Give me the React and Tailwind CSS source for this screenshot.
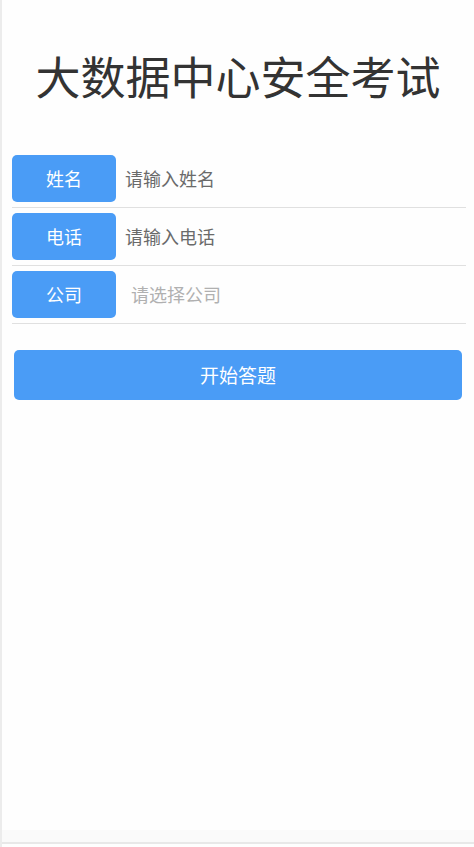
import React from 'react';

const font = { fontFamily: '"Noto Sans CJK SC", "Noto Sans", sans-serif' };

const Row = ({ label, placeholder, light }) => (
  <div className="flex items-center h-[58px] pt-[5px] pb-[6px] border-b border-[#e0e0e0]">
    <div className="w-[104px] h-[47px] rounded-[5px] bg-[#4a9cf6] text-white text-[18px] flex items-center justify-center">
      {label}
    </div>
    <div
      className={
        light
          ? 'pl-[15px] text-[18px] text-[#b0b0b0]'
          : 'pl-[9px] text-[18px] text-[#6a6a6a]'
      }
    >
      {placeholder}
    </div>
  </div>
);

export default function App() {
  return (
    <div
      className="h-[847px] w-[474px] bg-[#fefefe] border-l-2 border-[#ececec] flex flex-col"
      style={font}
    >
      <h1 className="pt-[49px] h-[150px] text-center text-[45px] leading-[54px] font-normal text-[#333333]">
        大数据中心安全考试
      </h1>
      <div className="pl-[10px] pr-[8px]">
        <Row label="姓名" placeholder="请输入姓名" />
        <Row label="电话" placeholder="请输入电话" />
        <Row label="公司" placeholder="请选择公司" light />
      </div>
      <div className="px-[12px] pt-[26px]">
        <button className="w-[448px] h-[50px] rounded-[5px] bg-[#4a9cf6] text-white text-[19px]">
          开始答题
        </button>
      </div>
      <div className="flex-1" />
      <div className="h-[14px] bg-[#fafafa] border-b-2 border-[#e8e8e8] mb-[3px]" />
    </div>
  );
}
